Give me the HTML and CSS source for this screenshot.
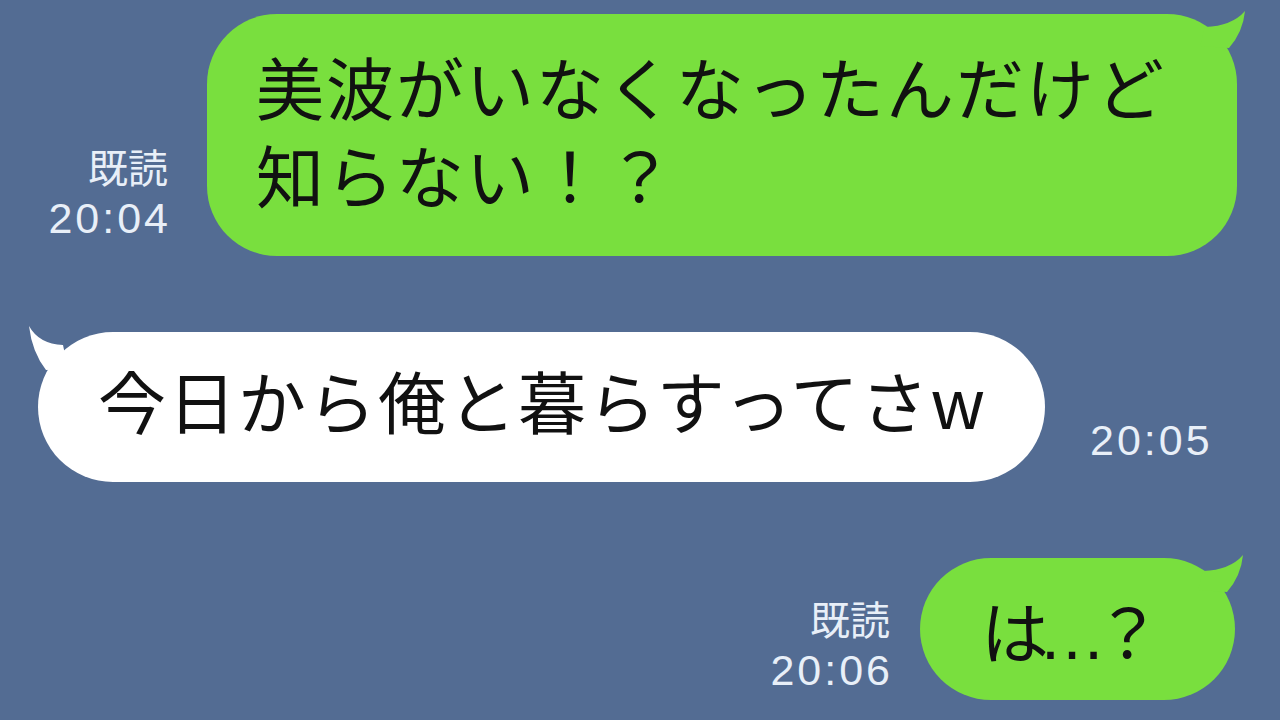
FILE: index.html
```html
<!DOCTYPE html>
<html lang="ja">
<head>
<meta charset="utf-8">
<title>LINE</title>
<link rel="stylesheet" href="styles.css">
</head>
<body>
<div class="chat">
  <div class="row row-right row-1">
    <div class="meta meta-1">
      <span class="read">既読</span>
      <span class="time">20:04</span>
    </div>
    <div class="bubble green bubble-1">
      <p class="msg">美波がいなくなったんだけど<br>知らない！？</p>
      <svg class="tail tail-right" viewBox="0 0 60 80" width="60" height="80"><path d="M8 40 L13 21 Q40 20 53 5 Q51 26 37 42 Z"/></svg>
    </div>
  </div>

  <div class="row row-left row-2">
    <div class="bubble white bubble-2">
      <p class="msg">今日から俺と暮らすってさw</p>
      <svg class="tail tail-left" viewBox="0 0 60 80" width="60" height="80"><path d="M45 45 L40 21 Q16 20 6 2 Q9 28 23 46 Z"/></svg>
    </div>
    <div class="meta meta-2">
      <span class="time">20:05</span>
    </div>
  </div>

  <div class="row row-right row-3">
    <div class="meta meta-3">
      <span class="read">既読</span>
      <span class="time">20:06</span>
    </div>
    <div class="bubble green bubble-3">
      <p class="msg"><span class="ha">は</span><span class="ell">…</span><span class="q">？</span></p>
      <svg class="tail tail-right" viewBox="0 0 60 80" width="60" height="80"><path d="M8 40 L13 21 Q40 20 53 5 Q51 26 37 42 Z"/></svg>
    </div>
  </div>
</div>
</body>
</html>
```

FILE: styles.css
```css
* { box-sizing: border-box; }

html, body {
  margin: 0;
  padding: 0;
  width: 1280px;
  height: 720px;
  overflow: hidden;
  background: #536c93;
  font-family: "Noto Sans CJK JP", "Noto Sans", sans-serif;
}

.chat {
  display: flex;
  flex-direction: column;
  gap: 76px;
  padding-top: 14px;
}

.row {
  display: flex;
  align-items: flex-end;
}

.row-right { justify-content: flex-end; }
.row-left { justify-content: flex-start; }

.row-1 { padding-right: 43px; gap: 39px; }
.row-2 { padding-left: 38px; gap: 45px; }
.row-3 { padding-right: 45px; gap: 30px; }

.bubble {
  position: relative;
  color: #111;
}

.green { background: #79df3e; fill: #79df3e; }
.white { background: #ffffff; fill: #ffffff; }

.msg {
  margin: 0;
  font-size: 68px;
  letter-spacing: 2px;
  white-space: nowrap;
}

.bubble-1 {
  width: 1030px;
  border-radius: 70px;
  padding: 28px 0 38px 49px;
}
.bubble-1 .msg { line-height: 88px; }

.bubble-2 {
  width: 1007px;
  height: 150px;
  border-radius: 75px;
  padding: 23px 0 0 60px;
}
.bubble-2 .msg { line-height: 90px; }

.bubble-3 {
  width: 315px;
  height: 142px;
  border-radius: 71px;
  padding: 27px 0 0 61px;
}
.bubble-3 .msg {
  line-height: 90px;
  display: flex;
  align-items: baseline;
  letter-spacing: 0;
}

.ha { width: 57px; }

.ell {
  font-family: "Liberation Sans", sans-serif;
  width: 56px;
}

.tail {
  position: absolute;
  top: -8px;
  display: block;
}
.tail path { fill: inherit; }
.tail-right { right: -15px; }
.tail-left { left: -15px; }

.meta {
  display: flex;
  flex-direction: column;
  align-items: flex-end;
  color: #e8eff8;
  line-height: 52px;
}

.read {
  font-family: "Noto Sans CJK JP", sans-serif;
  font-size: 40px;
}

.time {
  font-family: "Liberation Sans", "Noto Sans", sans-serif;
  font-size: 43px;
  letter-spacing: 3px;
  margin-right: -3px;
}

.meta-1 { margin-bottom: 12px; }
.meta-2 { margin-bottom: 16px; }
.meta-3 { margin-bottom: 4px; }
```
